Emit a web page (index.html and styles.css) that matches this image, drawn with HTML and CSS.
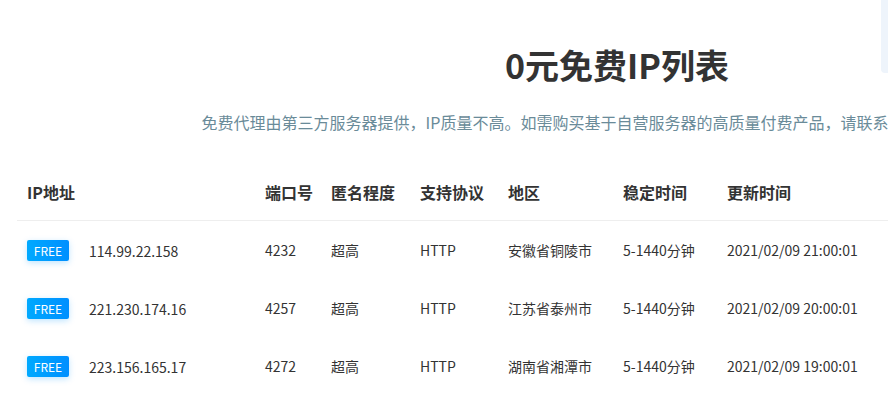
FILE: index.html
```html
<!DOCTYPE html>
<html lang="zh-CN">
<head>
    <meta charset="UTF-8">
    <title>0元免费IP列表</title>
    <link rel="stylesheet" href="styles.css">
</head>
<body>
    <div class="side-tab"></div>
    <div class="container">
        <h1>0元免费IP列表</h1>
        <p class="notation">免费代理由第三方服务器提供，IP质量不高。如需购买基于自营服务器的高质量付费产品，请联系客服获取更多优惠。</p>
        <table class="ip-table">
            <colgroup>
                <col class="c-ip">
                <col class="c-port">
                <col class="c-anon">
                <col class="c-proto">
                <col class="c-area">
                <col class="c-stable">
                <col class="c-update">
            </colgroup>
            <thead>
                <tr>
                    <th>IP地址</th>
                    <th>端口号</th>
                    <th>匿名程度</th>
                    <th>支持协议</th>
                    <th>地区</th>
                    <th>稳定时间</th>
                    <th>更新时间</th>
                </tr>
            </thead>
            <tbody>
                <tr>
                    <td><span class="badge">FREE</span><span class="ip">114.99.22.158</span></td>
                    <td>4232</td>
                    <td>超高</td>
                    <td>HTTP</td>
                    <td>安徽省铜陵市</td>
                    <td>5-1440分钟</td>
                    <td>2021/02/09 21:00:01</td>
                </tr>
                <tr>
                    <td><span class="badge">FREE</span><span class="ip">221.230.174.16</span></td>
                    <td>4257</td>
                    <td>超高</td>
                    <td>HTTP</td>
                    <td>江苏省泰州市</td>
                    <td>5-1440分钟</td>
                    <td>2021/02/09 20:00:01</td>
                </tr>
                <tr>
                    <td><span class="badge">FREE</span><span class="ip">223.156.165.17</span></td>
                    <td>4272</td>
                    <td>超高</td>
                    <td>HTTP</td>
                    <td>湖南省湘潭市</td>
                    <td>5-1440分钟</td>
                    <td>2021/02/09 19:00:01</td>
                </tr>
            </tbody>
        </table>
    </div>
</body>
</html>
```

FILE: styles.css
```css
body {
    font-family: "Noto Sans CJK SC", "Noto Sans", sans-serif;
    margin: 0;
    padding: 0;
    background-color: #fff;
    color: #333;
    overflow: hidden;
}
.container {
    width: 1200px;
    margin-left: 17px;
    padding-top: 41px;
}
h1 {
    margin: 0;
    font-size: 34px;
    line-height: 48px;
    font-weight: bold;
    text-align: center;
    color: #333;
}
.notation {
    margin: 21px 0 0;
    font-size: 16px;
    line-height: 24px;
    text-align: center;
    color: #6a8b99;
}
.ip-table {
    width: 100%;
    margin-top: 30px;
    border-collapse: collapse;
    table-layout: fixed;
}
.c-ip { width: 238px; }
.c-port { width: 66px; }
.c-anon { width: 89px; }
.c-proto { width: 88px; }
.c-area { width: 115px; }
.c-stable { width: 104px; }
.ip-table th {
    text-align: left;
    font-size: 16px;
    font-weight: bold;
    padding: 16px 10px;
    height: 24px;
    white-space: nowrap;
    border-bottom: 1px solid #eee;
}
.ip-table td {
    text-align: left;
    font-size: 14px;
    padding: 0 10px;
    height: 58px;
    white-space: nowrap;
}
.badge {
    display: inline-block;
    width: 42px;
    height: 21px;
    line-height: 21px;
    border-radius: 2px;
    background: linear-gradient(90deg, #00a9ff, #008fff);
    color: #fff;
    font-size: 12px;
    text-align: center;
    box-shadow: 0 2px 6px rgba(0, 150, 255, 0.25);
    vertical-align: middle;
}
.ip {
    margin-left: 20px;
    vertical-align: middle;
}
.side-tab {
    position: fixed;
    top: 0;
    right: 0;
    width: 7px;
    height: 73px;
    background: #eef4fb;
    border-bottom-left-radius: 4px;
}
```
